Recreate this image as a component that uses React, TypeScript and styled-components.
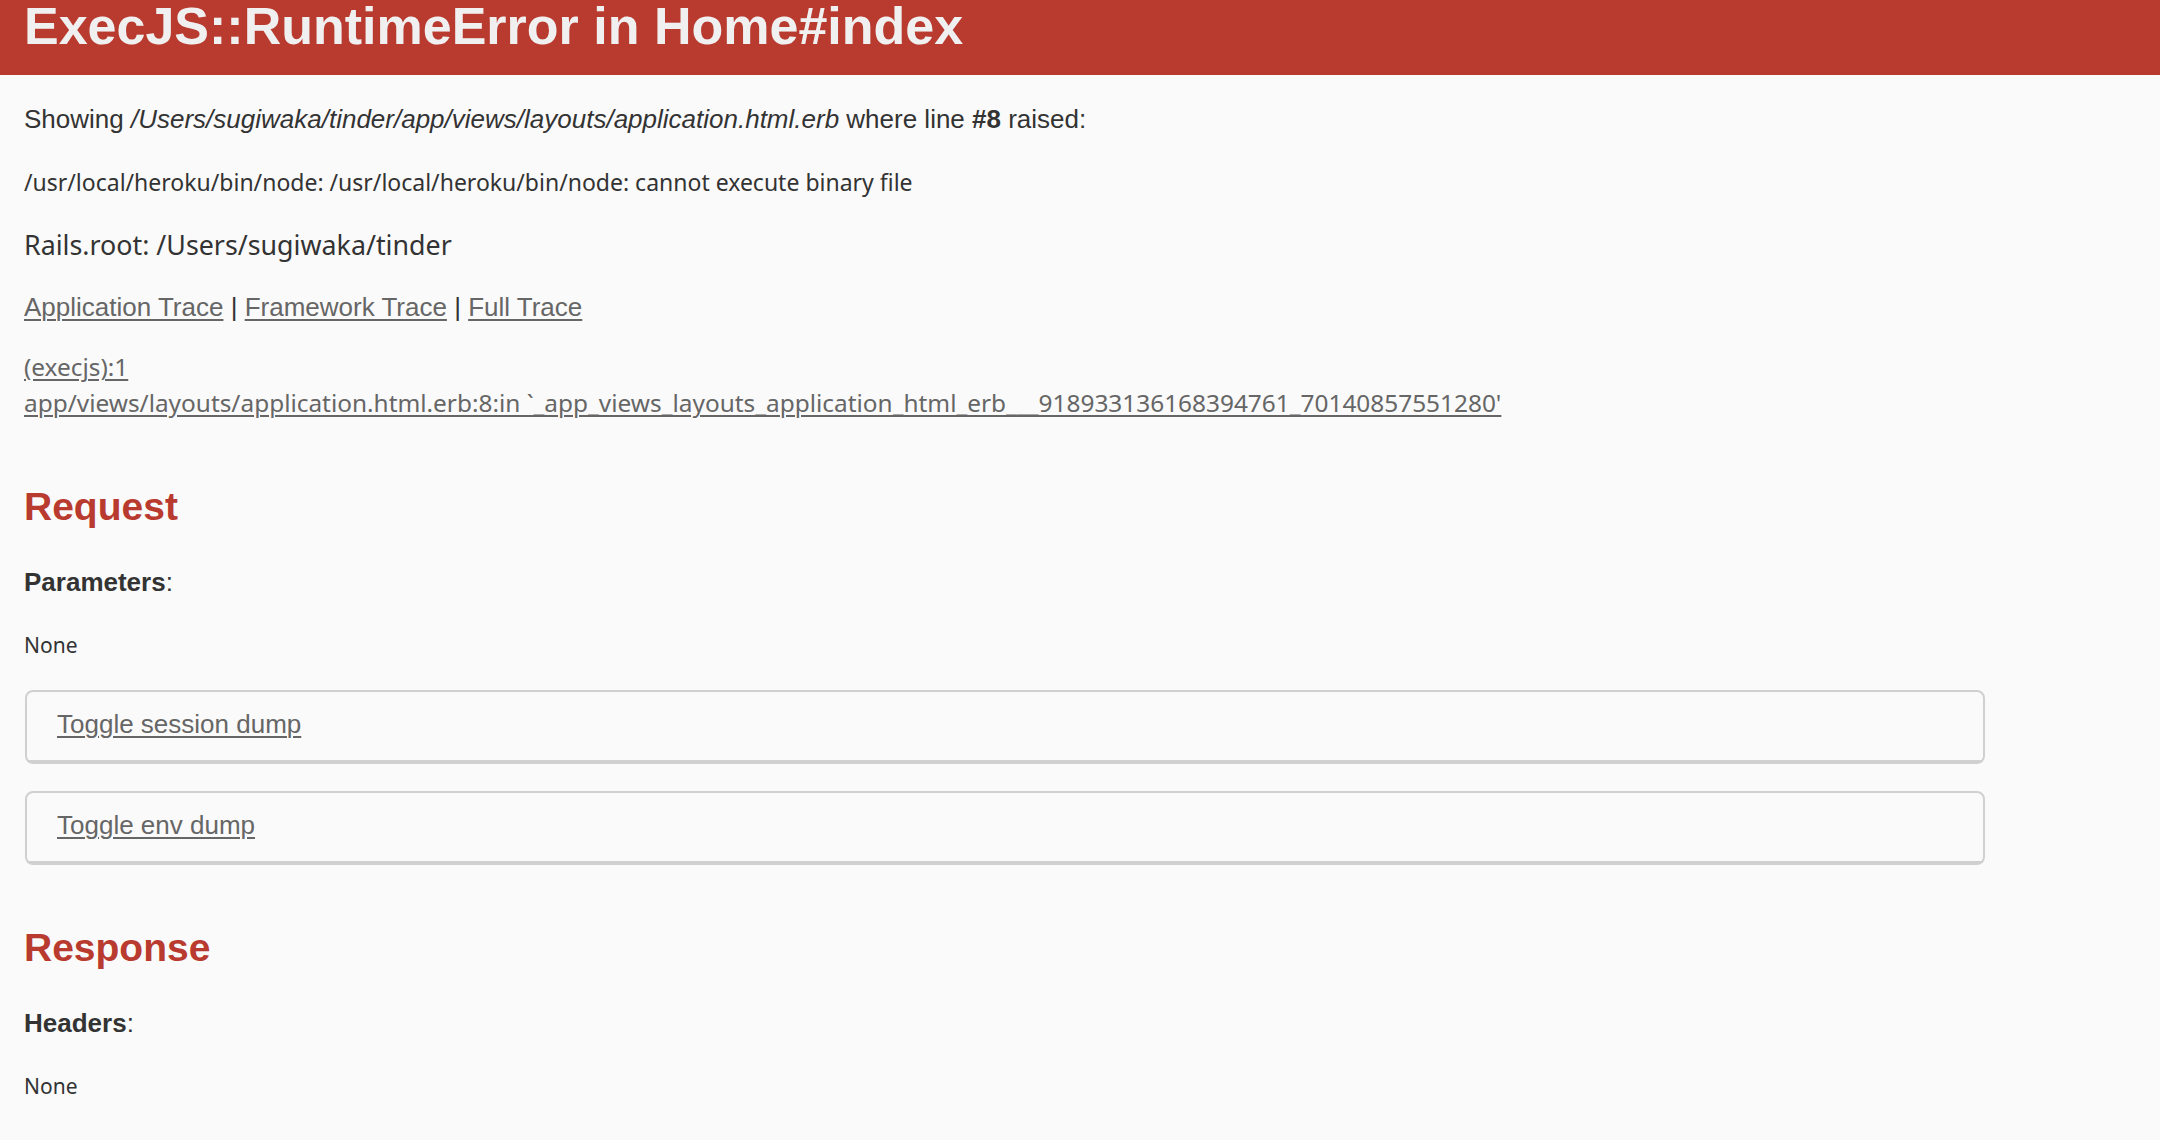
import React from 'react'
import styled, {createGlobalStyle} from 'styled-components'

const GlobalStyle = createGlobalStyle`
  html, body {
    margin: 0;
    padding: 0;
    background: #fafafa;
  }
  body {
    color: #333;
    font-family: "Liberation Sans", Arial, sans-serif;
  }
`

// stand-in for the Hiragino face used by the code / pre blocks
const HIRAGINO = `"Noto Sans", "Noto Sans CJK JP", sans-serif`

const traces = [
  '(execjs):1',
  "app/views/layouts/application.html.erb:8:in `_app_views_layouts_application_html_erb___918933136168394761_70140857551280'",
]

export default function App() {
  return (
    <>
      <GlobalStyle />
      <Header>
        <Title>ExecJS::RuntimeError in Home#index</Title>
      </Header>
      <Container>
        <Message>
          Showing <i>/Users/sugiwaka/tinder/app/views/layouts/application.html.erb</i> where
          line <b>#8</b> raised:
        </Message>
        <ErrorPre>
          /usr/local/heroku/bin/node: /usr/local/heroku/bin/node: cannot execute binary file
        </ErrorPre>
        <RootLine>Rails.root: /Users/sugiwaka/tinder</RootLine>
        <TraceNav>
          <Link href="#">Application Trace</Link> | <Link href="#">Framework Trace</Link> |{' '}
          <Link href="#">Full Trace</Link>
        </TraceNav>
        <TraceList>
          {traces.map((line) => (
            <TraceLink href="#" key={line}>
              {line}
            </TraceLink>
          ))}
        </TraceList>

        <SectionTitle $top={61}>Request</SectionTitle>
        <Label>
          <b>Parameters</b>:
        </Label>
        <Dump>None</Dump>

        <DetailsList>
          <Details>
            <Summary>
              <Link href="#">Toggle session dump</Link>
            </Summary>
          </Details>
          <Details>
            <Summary>
              <Link href="#">Toggle env dump</Link>
            </Summary>
          </Details>
        </DetailsList>

        <SectionTitle $top={58}>Response</SectionTitle>
        <Label>
          <b>Headers</b>:
        </Label>
        <Dump>None</Dump>
      </Container>
    </>
  )
}

const Header = styled.header`
  background: #b93a2e;
  color: #f0f0f0;
  height: 75px;
  padding: 0 24px;
  box-sizing: border-box;
`

const Title = styled.h1`
  margin: 0;
  font-size: 52px;
  line-height: 52px;
  font-weight: bold;
`

const Container = styled.div`
  padding: 0 24px 40px;
  display: flex;
  flex-direction: column;
  align-items: flex-start;
`

const Message = styled.p`
  margin: 26px 0 0;
  font-size: 26px;
  line-height: 36px;
`

const ErrorPre = styled.pre`
  margin: 27px 0 0;
  font-family: ${HIRAGINO};
  font-size: 23px;
  line-height: 36px;
  white-space: pre-wrap;
`

const RootLine = styled.p`
  margin: 27px 0 0;
  font-family: ${HIRAGINO};
  font-size: 26.8px;
  line-height: 36px;
`

const TraceNav = styled.div`
  margin-top: 26px;
  font-size: 26px;
  line-height: 36px;
`

const Link = styled.a`
  color: #666;
  text-decoration: underline;
  text-decoration-thickness: 2px;
  text-underline-offset: 3px;
`

const TraceList = styled.div`
  margin-top: 24px;
  display: flex;
  flex-direction: column;
`

const TraceLink = styled(Link)`
  font-family: ${HIRAGINO};
  font-size: 24.4px;
  line-height: 36px;
`

const SectionTitle = styled.h2<{$top: number}>`
  margin: ${(props) => props.$top}px 0 0;
  color: #b93a2e;
  font-size: 39px;
  line-height: 50px;
  font-weight: bold;
`

const Label = styled.p`
  margin: 32px 0 0;
  font-size: 26px;
  line-height: 36px;
`

const Dump = styled.pre`
  margin: 27px 0 0;
  font-family: ${HIRAGINO};
  font-size: 21px;
  line-height: 36px;
`

const DetailsList = styled.div`
  margin-top: 27px;
  display: flex;
  flex-direction: column;
  gap: 27px;
`

const Details = styled.div`
  width: 1960px;
  box-sizing: border-box;
  border: 2px solid #d0d0d0;
  border-radius: 8px;
  margin-left: 1px;
`

const Summary = styled.div`
  padding: 14px 30px 18px;
  border-bottom: 2px solid #d0d0d0;
  font-size: 26px;
  line-height: 36px;
`
